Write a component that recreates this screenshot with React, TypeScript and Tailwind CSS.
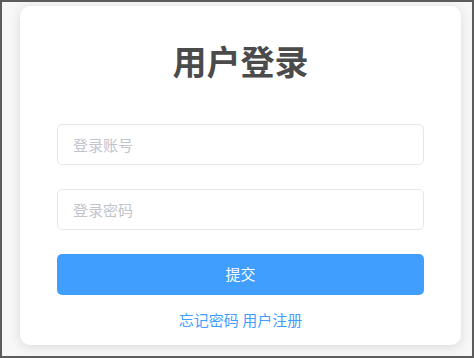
import React from "react";

const font = '"Noto Sans CJK SC", "Noto Sans", sans-serif';

export default function App() {
  return (
    <div
      className="w-[474px] h-[358px] border-2 border-[#5c5c5c] bg-[#f7f7f7] pl-[18px] pt-1 overflow-hidden"
      style={{ fontFamily: font }}
    >
      <div className="w-[441px] h-[339px] bg-white rounded-[10px] shadow-[0_2px_12px_rgba(0,0,0,0.12)] px-[37px] pt-[35px] flex flex-col">
        <h1 className="h-10 leading-10 text-center text-[34px] font-bold text-[#4b4b4b]">用户登录</h1>
        <input
          className="mt-[43px] h-[41px] w-full border border-[#e4e7ed] rounded-[5px] px-[15px] text-[15px] text-[#606266] placeholder:text-[#c0c4cc] outline-none"
          placeholder="登录账号"
        />
        <input
          type="password"
          className="mt-[24px] h-[41px] w-full border border-[#e4e7ed] rounded-[5px] px-[15px] text-[15px] text-[#606266] placeholder:text-[#c0c4cc] outline-none"
          placeholder="登录密码"
        />
        <button className="mt-[24px] h-[41px] w-full rounded-[5px] bg-[#409eff] text-white text-[15px]">
          提交
        </button>
        <div className="mt-[14px] text-center text-[15px] text-[#409eff] leading-[22px]">
          <a>忘记密码</a> <a>用户注册</a>
        </div>
      </div>
    </div>
  );
}
